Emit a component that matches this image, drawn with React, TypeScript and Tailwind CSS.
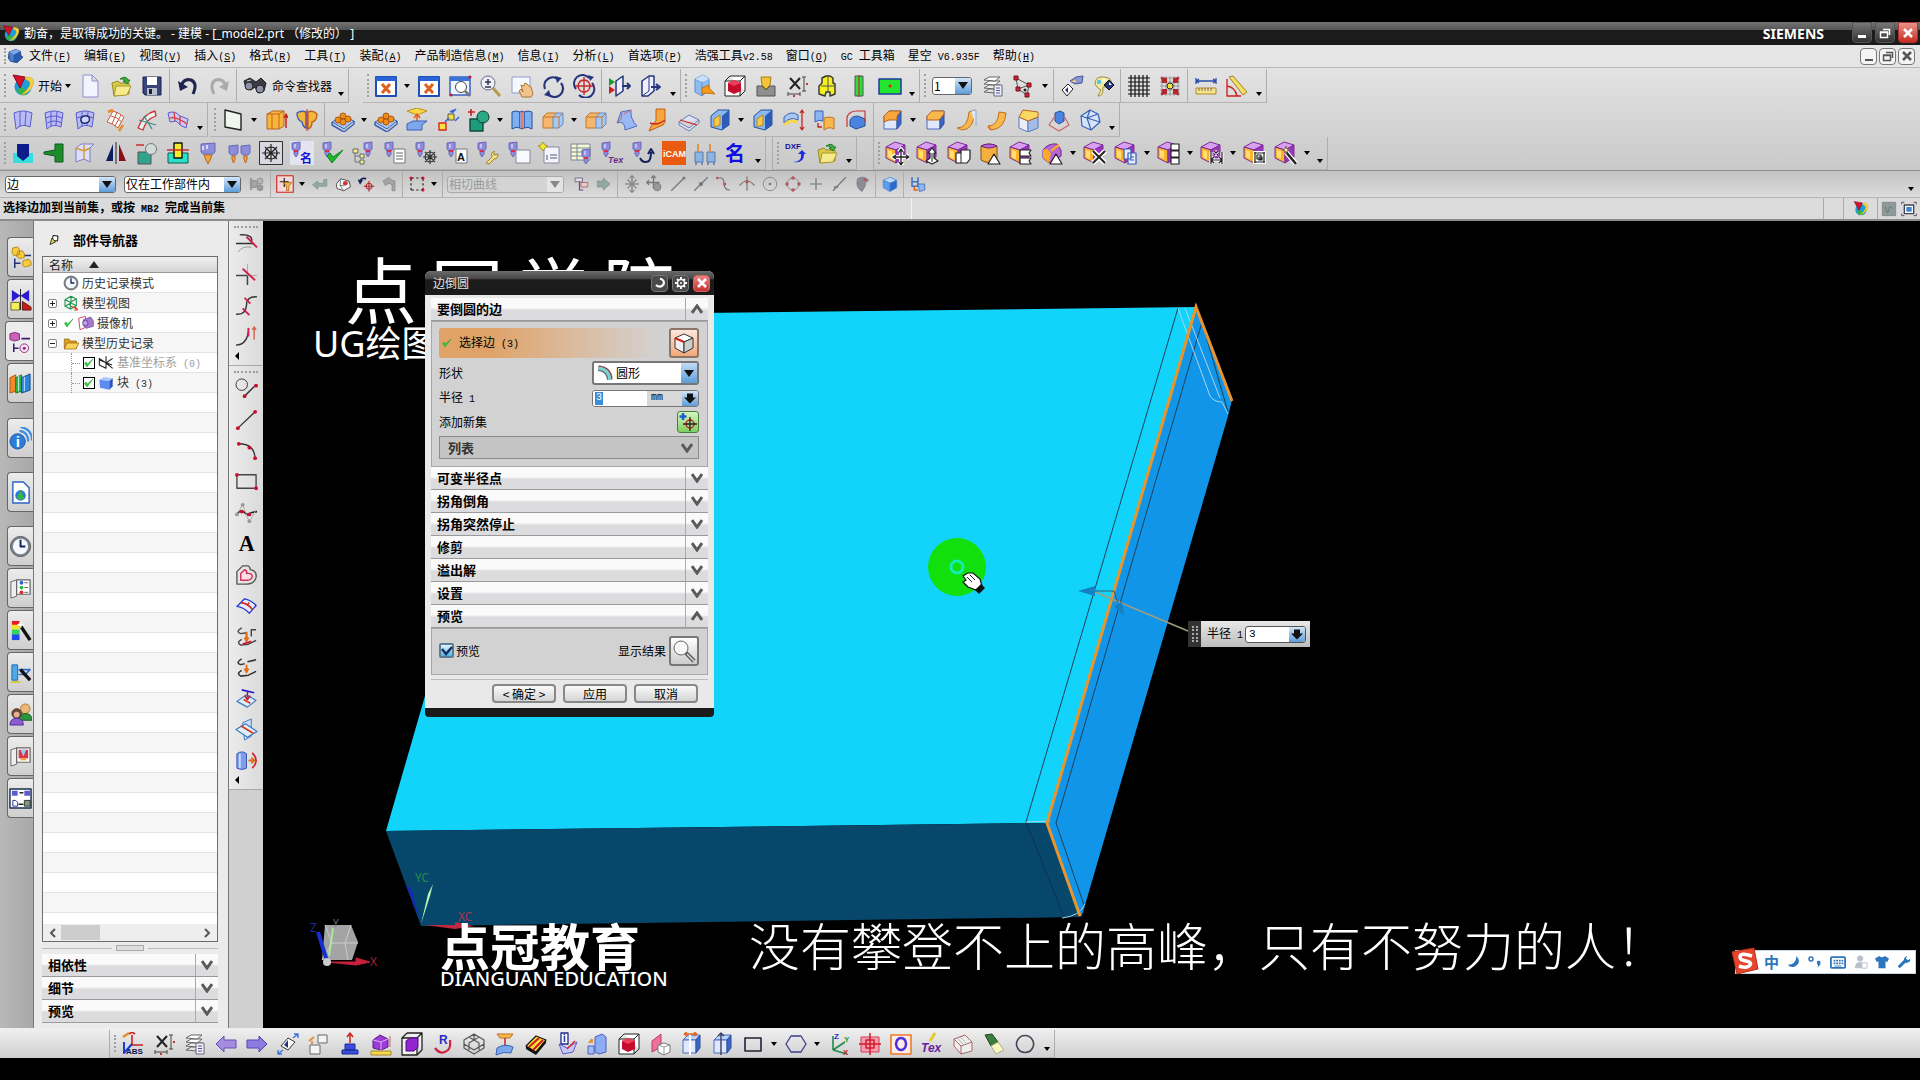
import React, { ReactNode } from 'react';
import clsx from 'clsx';

const p = (d: string, fill = 'none', stroke = 'none', w = 1) => (
  <path key={d + fill + stroke} d={d} fill={fill} stroke={stroke} strokeWidth={w} strokeLinejoin="round" />
);
const dot = (x: number, y: number, r = 1.6, fill = '#c8102e', stroke = 'none') => (
  <circle key={`${x}-${y}-${r}`} cx={x} cy={y} r={r} fill={fill} stroke={stroke} />
);

// Shared pieces that many of the tool icons are built from
const box = (top: string, left: string, right: string, line = 'none') => (
  <g key="box">
    {p('M3 7L12 3L21 7L12 11Z', top, line)}
    {p('M3 7V17L12 22V11Z', left, line)}
    {p('M21 7V17L12 22V11Z', right, line)}
  </g>
);
const drill = (
  <g key="drill">
    {p('M2 2L10 1V8L8 10V13L6 16L4 13V10L2 8Z', '#8d8ddb', '#6868b8')}
    {p('M4 10H8', 'none', '#d8304a', 2)}
    {p('M5 3V7', 'none', '#d5d5ff', 1.5)}
  </g>
);
const asmBox = (
  <g key="asm">
    {p('M1 6L10 1L20 4L11 9Z', '#d9a0f2', '#7a2c98')}
    {p('M1 6L11 9V22L1 17Z', '#fbb22c', '#7a2c98')}
    {p('M3 9L7 10V18L3 16Z', '#ffe070')}
    {p('M20 4V16L11 22V9Z', '#9a36bc', '#7a2c98')}
  </g>
);
const blueBox = (
  <g key="bb">
    {p('M4 8L9 3H21L17 8Z', '#bcd4f8', '#4a6fc0')}
    {p('M4 8H17V21H4Z', '#dfe8ff', '#4a6fc0')}
    {p('M17 8L21 3V16L17 21Z', '#3a66c8', '#2f509c')}
  </g>
);
const sheet = p('M3 5Q12 1 21 5L19 19Q11 15 5 21Z', '#b9bcf4', '#5a5ad0');
const page = p('M11 8H22V22H11Z', '#fff', '#777');
const folder = (
  <g key="folder">
    {p('M3 9L9 7L11 9H20V20L5 22Z', '#d8c94c', '#9a8d20')}
    {p('M7 12H22L18 21L5 22Z', '#f5eb8c', '#a8992c')}
    {p('M11 5Q17 1 19 6H21L18 10L14 7H16Q15 4 11 5Z', '#3fae3f', '#1e7d22')}
  </g>
);
const dims = (
  <g key="dims">
    {p('M5 4L15 15M15 4L5 15', 'none', '#222', 2)}
    {p('M19 3V17M17 3H21M17 17H21M3 20H15M3 18V22M15 18V22', 'none', '#444')}
    {p('M21 9L23 11M23 9L21 11M8 21L10 23M10 21L8 23', 'none', '#c33')}
  </g>
);
const layers = (
  <g key="layers">
    {p('M3 18L8 15H19L14 19Z', '#e4e4e4', '#666')}
    {p('M3 14L8 11H19L14 15Z', '#eee', '#666')}
    {p('M3 10L8 7H19L14 11Z', '#fff', '#666')}
    {p('M3 6L8 3H19L14 7Z', '#fff', '#666')}
    {p('M13 11H21V22H13Z', '#eef', '#667')}
    {p('M15 14H19M15 16.5H19M15 19H19', 'none', '#558')}
  </g>
);
const swirl = (
  <g key="swirl">
    {dot(12, 13, 8.5, '#1a9ee0')}
    {p('M5 16Q9 23 17 20L12 13Z', '#35b24a')}
    {p('M15 3Q25 3 22 11Q19 19 10 21Q18 15 19 10Q19 6 15 6Z', '#f3d23a', '#c7a010', 0.5)}
    {p('M2 1L14 3L9 14Z', '#d3122c', '#8b0c1c')}
  </g>
);
const check = p('M3 13L8 20L20 4L9 14L6 10Z', '#2ed33a', '#149620');
const winX = (
  <g key="winx">
    {p('M2 3H22V22H2Z', '#fff', '#1c4fb8', 2)}
    {p('M2 3H22V7H2Z', '#2a64d8')}
    {p('M8 10L16 19M16 10L8 19', 'none', '#e0601c', 3)}
  </g>
);
const text = (x: number, y: number, t: string, fill: string, size: number, extra = '') => (
  <text key={t} x={x} y={y} fill={fill} fontSize={size} className={clsx("font-['Liberation_Sans','Noto_Sans_CJK_SC',sans-serif] font-bold", extra)}>{t}</text>
);

const icons: Record<string, ReactNode> = {
  nx: swirl,
  doc: p('M5 1H14L20 7V23H5Z M14 1V7H20', '#f4f4ff', '#8e8ed0'),
  open: folder,
  save: [p('M3 3H21V21H5L3 19Z', '#39457c', '#1a2350'), p('M7 3H17V11H7Z', '#fff'), p('M7 14H17V21H7Z', '#b8c0d0'), p('M9 15H12V20H9Z', '#222')],
  undo: [p('M5 12Q8 4 15 6Q22 9 17 20', 'none', '#1e2350', 3), p('M2 7L4 17L12 13Z', '#1e2350')],
  redo: [p('M19 12Q16 4 9 6Q2 9 7 20', 'none', '#aaa', 3), p('M22 7L20 17L12 13Z', '#aaa')],
  binoculars: [p('M1 7L7 4L13 8L18 4L23 9L21 17L15 19L12 13L8 16L3 14Z', '#3b3b46', '#222'), dot(6, 12, 4, '#8c90a8', '#222'), dot(17, 15, 4, '#8c90a8', '#222'), p('M4 7L8 6', 'none', '#ccc')],
  fit: winX,
  fit2: winX,
  zoomWin: [p('M2 3H22V21H2Z', '#eef4ff', '#3a62c0', 1.5), p('M2 3H22V7H2Z', '#3a72d8'), dot(13, 13, 5.5, '#fff', '#444'), p('M17 17L22 22', 'none', '#777', 2.5), dot(22, 3, 1.5), dot(3, 21, 1.5)],
  zoom: [dot(9, 9, 7, '#eef', '#6a6a80'), p('M14 14L21 22', 'none', '#b79a50', 3), p('M6 8H12M9 5V11M6 13H12', 'none', '#334', 1.5)],
  pan: [p('M2 3H20V19H2Z', '#f6f8ff', '#8c9cd0'), p('M12 23L9 17L11 15L13 18L11 11L14 12L15 9L17 10L19 12L21 13L23 20L21 23Z', '#f2c48c', '#a87838')],
  rotate: [p('M4 15A8.5 8.5 0 0 1 17 5', 'none', '#24357c', 2.2), p('M20 9A8.5 8.5 0 0 1 7 20', 'none', '#24357c', 2.2), p('M14 2L21 4L16 9Z', '#24357c'), p('M10 23L3 21L8 16Z', '#24357c')],
  orient: [p('M4 15A8.5 8.5 0 0 1 17 4', 'none', '#24357c', 2), p('M20 9A8.5 8.5 0 0 1 7 21', 'none', '#24357c', 2), p('M12 6A6 6 0 1 0 12.1 6M12 3V21M3 12H21', 'none', '#c62828', 1.4), p('M16 1L22 3L18 7Z', '#24357c')],
  clipView: [p('M1 4L7 8L1 12Z', '#1c9c2c'), p('M1 12L7 16L1 20Z', '#d01c1c'), p('M8 7L15 2V17L8 22Z', '#eef', '#24357c', 1.5), p('M14 12H21M19 9L22 12L19 15', 'none', '#24357c', 2)],
  clipEdit: [p('M3 7L10 2H15V17L9 22H3Z', '#eef', '#24357c', 1.5), p('M10 2V17L3 22', 'none', '#24357c'), p('M12 13H20M17 10L21 13L17 16', 'none', '#24357c', 2)],
  move: [p('M3 5L11 1L17 5V16L10 22L3 18Z', '#8ebcf0', '#5c8ccc'), p('M3 5L10 8V22', 'none', '#5c8ccc'), p('M3 5L11 1L17 5L10 8Z', '#c8e0fa'), p('M10 14L17 11V14L23 20L14 19L10 20Z', '#f39a1c', '#c27010')],
  redCube: [p('M2 7H17V22H2ZM7 2H22V17M2 7L7 2M17 7L22 2M17 22L22 17', '#fff', '#222'), p('M5 9L11 6L18 9V17L11 20L5 17Z', '#c30d2b'), p('M5 9L11 6L18 9L11 12Z', '#f03d5c')],
  holder: [p('M3 12H8L12 16L16 12H21V22H3Z', '#8f8f8f', '#555'), p('M7 3H17L16 11L12 15L8 11Z', '#f3c33c', '#a87c10')],
  dims,
  puzzle: [p('M6 4L10 2H14L17 4V9L19 10V20L14 22V18H10L9 22L3 20V12L6 9Z', '#f4ee22', '#333', 1.4), p('M12 3V18M5 12H19', 'none', '#555')],
  greenBar: [p('M8 2H16V22H8Z', '#27e03a', '#555'), p('M12 1V23', 'none', '#c23', 1.2)],
  greenBox: [p('M1 5H23V20H1Z', '#22e52e', '#1c3aa0', 1.5), dot(12, 12, 1.5, '#d22')],
  layers,
  nodes: [p('M4 4L17 11L6 15L15 21M4 4L6 15M17 11L15 21', 'none', '#555'), p('M2 2H6V6H2ZM4 13H8V17H4ZM15 9H19V13H15ZM13 19H17V23H13Z', '#c24', '#711'), dot(13, 16, 1.5, '#222')],
  handLayer: [p('M10 7L16 3L23 2L22 9L15 10Z', '#8a94d8', '#4c569c'), p('M11 8L15 5L17 8', '#f6d29c', '#997'), p('M2 16L8 10L13 15L7 22Z', '#fff', '#222'), p('M5 16L8 13V19Z', '#24357c')],
  palette: [p('M4 10Q4 2 13 3Q22 4 20 10Q18 14 14 13Q11 12 12 16Q12 22 7 22L10 16Q6 14 4 10Z', '#f4ea9c', '#9c8c3c'), dot(8, 8, 2.2, '#4cc8e8'), dot(13, 6, 1.6, '#fff'), p('M13 11L18 6L23 11L18 16Z', '#24357c', '#111'), p('M18 8L21 11H18Z', '#fff')],
  grid: p('M4 1V23M8 1V23M12 1V23M16 1V23M20 1V23M1 4H23M1 8H23M1 12H23M1 16H23M1 20H23', 'none', '#111', 1.2),
  gridSnap: [p('M4 2V22M8 2V22M12 2V22M16 2V22M20 2V22M2 4H22M2 8H22M2 12H22M2 16H22M2 20H22', 'none', '#999'), p('M3 3L9 4L9 9L4 9ZM15 4L21 3L20 9L15 9ZM4 15H9V20L3 21ZM15 15H20L21 21L15 20Z', '#b3262c'), dot(12, 12, 3, '#f2e53c', '#222')],
  measure: [p('M2 14H22V20H2Z', '#f6e58c', '#a48a2c'), p('M5 14V17M8 14V17M11 14V17M14 14V17M17 14V17', 'none', '#865'), p('M2 7H22M2 4V10M22 4V10M2 7L5 5M2 7L5 9M22 7L19 5M22 7L19 9', 'none', '#2a4ca8', 1.3)],
  angle: [p('M4 3L8 2L22 18L18 21Z', '#f2dc6c', '#a08420'), p('M2 5V22H16M2 12Q10 13 12 22', 'none', '#c22', 1.4)],

  surf1: [sheet, p('M9 4L9 18M15 4L14 17', 'none', '#5a5ad0')],
  surf2: [sheet, p('M9 4L9 18M15 4L14 17M4 10Q12 6 20 10M5 15Q12 11 20 15', 'none', '#5a5ad0')],
  surf3: [sheet, p('M9 4L9 18M15 4L14 17M4 10Q12 6 20 10', 'none', '#5a5ad0'), p('M8 10Q12 6 16 9Q18 14 13 15Q7 16 8 10Z', '#cfd8f8', '#1a2a60', 1.5)],
  surf4: [p('M9 3Q16 5 20 9L14 20Q8 15 3 14Z', '#fff', '#c85a3c'), p('M13 4L8 16M17 7L11 18M7 8Q13 9 18 14', 'none', '#c85a3c'), p('M4 4L9 2M19 17L15 23', 'none', '#e88c2c', 2.5)],
  surf5: [p('M3 20Q8 6 20 3L21 8Q11 11 8 22Z', '#e6f4ef', '#c33', 1.3), p('M4 12L21 17M9 8L17 21', 'none', '#3a8a8a', 1.3)],
  surf6: [p('M2 5Q9 2 14 8L22 11L20 20Q14 18 10 13L4 14Z', '#c9c9f8', '#5a5ad0'), p('M8 4L9 13M14 8V17M4 10Q10 8 21 16', 'none', '#d33', 1.2)],
  plane: p('M4 2L20 6V22L4 19Z', '#eef6ee', '#222', 1.4),
  extrude: [p('M3 6L9 3H20V18L15 21H3Z', '#f6b63c', '#b8641c'), p('M8 6V21M15 6V21M3 6H15L20 3', 'none', '#c4601c'), p('M22 20V7M20 10L22 6L24 10', 'none', '#c22', 1.5)],
  revolve: [p('M2 5Q6 2 11 4V20Q8 19 7 14Q2 12 2 5Z', '#f6b63c', '#3a62b8', 1.4), p('M13 4Q18 2 22 6Q22 13 17 14Q17 20 13 21Z', '#f6b63c', '#b8641c', 1.4), p('M12 1V23', 'none', '#c22')],
  pattern: [p('M1 14L12 8L23 13L13 21Z', '#a6c4f4', '#3a62b8'), p('M1 14V17L13 24L23 16V13', 'none', '#3a62b8', 1.5), dot(7, 12, 3, '#f08c1c', '#a85a08'), dot(12, 8, 3, '#f08c1c', '#a85a08'), dot(12, 14, 3, '#f08c1c', '#a85a08'), dot(17, 11, 3, '#f08c1c', '#a85a08')],
  padUp: [p('M2 3L12 0L22 3L12 7Z', '#f8d848', '#c09018'), p('M12 7V15M9 10L12 6L15 10', 'none', '#e0601c', 1.5), p('M2 16L8 13H22L17 17V22H2Z', '#7ca8ec', '#3a62b8')],
  steps: [p('M3 15H10V22H3Z', '#f4e53c', '#d22', 1.4), p('M12 6H18V12H12Z', '#f4e53c', '#555'), p('M9 14L13 10M16 5L20 1M19 13L23 9M14 4L18 2', 'none', '#3a62d8', 1.6)],
  unite: [p('M3 11H16V23H3Z', '#1c9c78', '#0c4c3c', 1.4), dot(16, 9, 6, '#2aa884', '#0c3c30'), p('M4 1V8M1 4H8', 'none', '#c22', 1.6)],
  sew: [p('M2 4Q6 2 10 4V20Q6 18 2 21ZM14 4Q18 2 22 4V21Q18 18 14 20Z', '#7cb0f0', '#24509c'), p('M10 4Q12 2 14 4V20Q12 22 10 20Z', '#fff', '#24509c'), p('M12 3V21', 'none', '#c22', 1.2)],
  offsetFace: [p('M2 9L6 5H16V16L12 20H2Z', '#f6b66c', '#c2762c'), p('M12 9L16 5H22V16L18 20H12Z', '#a6c8f4', '#5c8ccc'), p('M2 9H18V20M18 9L22 5', 'none', '#c2762c')],
  bend: [p('M6 4L16 2Q15 11 22 18L10 22Q10 12 2 15Z', '#9ab8f4', '#4a6fc0'), p('M6 4Q9 9 2 15M16 2L9 6', 'none', '#c66')],
  boot: [p('M10 1H19V14L17 17L3 23Q5 16 10 13Z', '#f6a63c', '#c2601c'), p('M4 15Q11 18 19 12', 'none', '#c22', 1.4)],
  slab: [p('M2 14L12 7L22 12L12 20ZM2 14V17L12 23L22 15V12', '#dce4f4', '#6a7cb0'), p('M3 12L20 17', 'none', '#c22', 1.3)],
  clipBox: [p('M3 8L10 2H21V17L14 22L3 19Z', '#8cb8f0', '#24509c'), p('M14 8L21 2V17L14 22Z', '#2c5cb8'), p('M6 11L12 7V17L6 19Z', '#f8c848', '#b8841c')],
  thicken: [p('M2 9Q9 2 16 7V12Q9 8 2 15Z', '#a6c8f4', '#3a62b8'), p('M2 15Q9 9 16 13V16Q9 12 2 18Z', '#f8d848'), p('M20 2V22M18 5L20 2L22 5M18 19L20 22L22 19', 'none', '#c22', 1.3)],
  drape: [p('M2 3H10V13Q6 11 2 14Z', '#8cb4f0', '#3a62b8'), p('M11 10Q16 8 21 10V21Q16 18 11 22Z', '#f8b84c', '#c2701c'), p('M5 15V19H9', 'none', '#c22', 1.4)],
  wrap: [p('M6 13Q7 8 14 8L21 11V18L12 21L6 18Z', '#4b84e0', '#24509c'), p('M3 19V9Q5 3 13 3H21V14', 'none', '#c33', 1.2)],
  edgeBlend: [blueBox, p('M4 8L9 3H21L17 8V12H9L4 14Z', '#f6a63c', '#b8641c')],
  faceBlend: [blueBox, p('M9 3H21V6L16 12H4V8Z', '#f8b84c', '#b8641c')],
  blend1: [p('M3 20Q14 20 15 4L21 2Q20 22 8 22Z', '#f8b84c', '#c2701c'), p('M17 3L22 2V18', '#dce8ff', '#8ca8d0')],
  blend2: [p('M3 18Q13 18 14 4L21 5Q20 21 6 22Z', '#f8b84c', '#c2701c'), p('M3 18L6 22', 'none', '#e07030', 2)],
  chamfer: [p('M3 9L12 13V24L3 20Z', '#e8eefa', '#5c78b8'), p('M12 13L22 9V20L12 24Z', '#a6bce8', '#5c78b8'), p('M3 9L7 2L22 4V9L12 13Z', '#f8d860', '#c2601c')],
  draft: [p('M8 5L13 3L17 5V13L12 16L8 13Z', '#4b84e0', '#24509c'), p('M8 8L2 17L12 23L22 17L17 8', 'none', '#c66', 1.2)],
  body: p('M12 2L20 6L22 14L13 22L4 18L3 8ZM12 2L9 10L13 22M9 10L3 8M9 10L20 6M9 10L22 14', '#d5e4fa', '#3a62b8', 1.2),

  cavity: [p('M2 12H22V22H2Z', '#35e0dc'), p('M6 3H18V15L12 20L6 15Z', '#0c1c8c')],
  arrowSolid: p('M21 3V21H13V15L2 13V11L13 9V3Z', '#1c8c2c', '#0c5c1c'),
  prism: [p('M3 7L8 3H21L17 7V21L11 18L3 21Z', '#dce0fa', '#7c7cc8'), p('M11 4V18M17 7L11 10L3 7', 'none', '#d8982c', 1.4)],
  mirror: [p('M9 3V20L2 20Z', '#0c1c5c'), p('M15 3V20H22Z', '#8c0c1c'), p('M12 1V23', 'none', '#222')],
  subtract: [p('M3 11H16V23H3Z', '#2fa58c', '#555'), dot(16, 8, 5.5, '#d0dcd8', '#777'), p('M1 4H9', 'none', '#c22', 1.4)],
  insertBody: [p('M2 12H22V22H2Z', '#2ce0c8', '#0a5c4c'), p('M8 2H16V17H8Z', '#f6ec2c', '#111', 1.4), p('M1 9H23', 'none', '#c22', 1.4)],
  drill1: [p('M4 3L18 2V11L16 13H6L4 11Z', '#8d8ddb', '#6868b8'), p('M7 14H15L13 19L11 23L9 19Z', '#f3a83c', '#b8641c'), p('M6 5V9M10 4V8', 'none', '#d5d5ff', 2)],
  drill2: [p('M1 5L10 4V12L8 14H3L1 12ZM13 5L22 4V12L20 14H15L13 12Z', '#8d8ddb', '#6868b8'), p('M4 15H7V18L5.5 22L4 18ZM16 15H19V18L17.5 22L16 18Z', '#f3a83c', '#b8641c')],
  wheel: [p('M0.5 0.5H23.5V23.5H0.5Z', '#d8d8e0', '#333'), p('M12 6A6 6 0 1 0 12.1 6M12 3V21M3 12H21M6 6L18 18M18 6L6 18', 'none', '#222', 1.2)],
  drillName: [p('M0 0H24V24H0Z', '#e4e4f0'), drill, text(10, 22, '名', '#1414d8', 12)],
  drillCheck: [drill, p('M6 15L11 22L22 9L12 16L9 12Z', '#1cb82c', '#0c8418')],
  drillTree: [<g key="g" transform="translate(10)">{drill}</g>, p('M3 10V21H9M3 15H9', 'none', '#777'), p('M1 8H6V12H1ZM8 13H12V17H8ZM8 19H12V23H8Z', '#f4ee8c', '#666')],
  drillSheet: [drill, page, p('M13 12H20M13 15H20M13 18H20', 'none', '#666')],
  drillWheel: [drill, p('M16 11A5 5 0 1 0 16.1 11M16 9V23M9 16H23M11 11L21 21M21 11L11 21', 'none', '#333', 1.2)],
  drillA: [drill, page, text(12, 20, 'A', '#111', 11)],
  drillWrench: [drill, p('M10 22L16 16Q14 12 18 10L18 14L22 13Q22 18 18 18L13 23Z', '#f4e08c', '#9c8420')],
  drillDoc: [drill, p('M9 9H23V22H9Z', '#f8f8ff', '#889')],
  starDoc: [p('M6 6H21V22H6Z', '#f4f4ff', '#889'), p('M5 1L7 4L10 5L7 7L5 10L3 7L0 5L3 4Z', '#f4e53c', '#a89820'), p('M12 14H19M12 17H19M9 14V19', 'none', '#556')],
  drillTable: [p('M2 3H21V19H2Z', '#f6f6d0', '#789'), p('M2 7H21M2 11H21M2 15H21M8 3V19', 'none', '#789'), <g key="g" transform="translate(11 7)">{drill}</g>],
  drillTex: [drill, text(8, 22, 'Tex', '#6a2c8c', 9, 'italic')],
  swap: [<g key="g">{drill}</g>, p('M9 17Q12 23 18 20Q20 17 20 11M17 13L20 8L23 13', 'none', '#14205c', 2)],
  icam: [p('M0 0H24V24H0Z', '#ea5b12'), text(1, 16, 'iCAM', '#fff', 9)],
  twin: [p('M2 11H10V21H2ZM14 11H22V21H14Z', '#8db4e0', '#5878b0'), p('M5 11V3M17 11V3', 'none', '#d8984c', 2), p('M3 21V24M9 21V24M15 21V24M21 21V24', 'none', '#5878b0', 1.5)],
  name: text(1, 20, '名', '#1010e0', 20),
  dxf: [text(1, 8, 'DXF', '#1010a0', 8), p('M9 21Q18 21 17 13H14L18 9L22 13H20Q20 23 9 21Z', '#1a2ae0')],
  asmMove: [asmBox, p('M16 9V23M9 16H23M14 11L16 8L18 11M14 21L16 24L18 21M11 14L8 16L11 18M21 14L24 16L21 18', 'none', '#fff', 4), p('M16 9V23M9 16H23M14 11L16 8L18 11M14 21L16 24L18 21M11 14L8 16L11 18M21 14L24 16L21 18', 'none', '#222', 1.3)],
  asmUp: [asmBox, p('M16 7L20 12H18V17L22 20L16 23L10 20L14 17V12H12Z', '#fff', '#222', 1.2), p('M16 12V21', 'none', '#222')],
  asmDoc: [asmBox, p('M9 12H14V9H23V18L20 22H9Z', '#fff', '#222', 1.2), p('M14 12V22', 'none', '#222')],
  asmCyl: [p('M3 5Q11 1 19 5V19Q11 24 3 19Z', '#f3b03c', '#8a4c10'), p('M3 5Q11 1 19 5Q11 9 3 5Z', '#b765d8', '#6d2386'), p('M16 13L22 23H10Z', '#fff', '#222', 1.2)],
  asmFlag: [asmBox, p('M11 9H22L20 12L22 15H11ZM11 17H22L20 20L22 23H11Z', '#fff', '#222', 1.2)],
  asmRound: [p('M3 9Q8 2 17 3L21 9V15L9 22L3 17Z', '#b765d8', '#6d2386'), p('M3 9Q8 6 11 13L9 22L3 17Z', '#f8a82a'), p('M11 10L19 4', 'none', '#f8a82a', 2.5), p('M16 13L22 23H10Z', '#fff', '#222', 1.2)],
  asmX: [asmBox, p('M10 10L22 22M22 10L10 22', 'none', '#fff', 5), p('M10 10L22 22M22 10L10 22', 'none', '#222', 2)],
  asmCopy: [asmBox, p('M10 8H17V18H10Z M14 12H22V23H14Z', '#e4ecff', '#3a5cb0', 1.2), p('M16 16H20M16 19H20', 'none', '#3a5cb0')],
  asmList: [asmBox, p('M14 3H22V9H14ZM14 10H22V16H14ZM14 17H22V23H14Z', '#fff', '#222', 1.2)],
  asmDim: [asmBox, p('M11 11V23M22 11V23M11 19H22M14 16L11 19L14 22M19 16L22 19L19 22M14 10L18 14M18 10L14 14', 'none', '#fff', 3), p('M11 11V23M22 11V23M11 19H22M14 16L11 19L14 22M19 16L22 19L19 22M14 10L18 14M18 10L14 14', 'none', '#222', 1.2)],
  asmGroup: [asmBox, p('M10 10H23V23H10Z', '#fff'), p('M12 11V22M21 11V22M11 12H22M11 21H22M14 14H18V18H14ZM16 16H19V19H16Z', 'none', '#222', 1.2)],
  asmWand: [asmBox, p('M12 11L22 23', 'none', '#fff', 5), p('M12 11L22 23', 'none', '#222', 2.5), p('M12 5L13 8L16 9L13 10L12 13L11 10L8 9L11 8Z', '#fff7a0', '#865')],

  gears: [dot(8, 12, 5, '#a4a4a4', '#888'), dot(16, 8, 4, '#b4b4b4', '#888'), dot(16, 17, 4, '#9c9c9c', '#888'), p('M4 4V20', 'none', '#999', 3)],
  filter: [p('M1 1H23V23H1Z', '#f6d8d8', '#c22', 1.5), p('M11 4V16M5 9H17', 'none', '#222', 1.6), p('M10 10H21L17 15V21H14V15Z', '#f4b83c', '#a8641c')],
  back: p('M21 6V15H9V19L2 13L9 8V11H17V6Z', '#93a8a8', '#7c9090'),
  box3: [p('M3 12L9 5L20 8L22 16L13 21L4 18Z', '#f4f4f4', '#555', 1.3), p('M9 5L8 14L13 21M20 8L13 14L8 14', 'none', '#777', 1.2), dot(15, 11, 3, '#c33')],
  undoSel: [p('M4 9Q5 3 12 5', 'none', '#14205c', 2.5), p('M1 6L4 13L8 7Z', '#14205c'), p('M16 8V22M9 15H23M16 11A4 4 0 1 0 16.1 11', 'none', '#b3262c', 1.6)],
  hammer: p('M4 8L12 3L16 7L20 8V21H16V13L12 11L7 14Z', '#a4a4a4', '#8c8c8c'),
  dashBox: [p('M4 4H8M11 4H14M17 4H20M4 20H8M11 20H14M17 20H20M4 4V8M4 11V14M4 17V20M20 4V8M20 11V14M20 17V20', 'none', '#222', 1.6), dot(4, 4, 2), dot(20, 20, 2), dot(20, 4, 2)],
  chain: [p('M4 4H14V9H4Z', '#e8d8e8', '#557'), p('M12 10H21V16H12Z', '#e8c8c8', '#a55'), p('M10 9V20H15', 'none', '#557', 1.6)],
  go: p('M3 8H11V4L20 12L11 20V16H3Z', '#93a8a0', '#7c9088'),
  snapAny: p('M12 3V21M3 12H21M6 6L18 18M18 6L6 18M9 4L12 1L15 4M9 20L12 23L15 20', 'none', '#8c8c8c', 2),
  snapGear: [p('M10 2V18M2 10H18M7 4L10 1L13 4M4 7L1 10L4 13', 'none', '#777', 1.8), dot(15, 16, 5, '#999', '#777')],
  snapEnd: [p('M3 21L20 4', 'none', '#777', 1.6), dot(20, 4, 2, '#777')],
  snapMid: [p('M3 21L21 3', 'none', '#777', 1.6), dot(12, 12, 2.8, '#777')],
  snapPole: [p('M3 4Q12 2 12 11Q12 20 20 20', 'none', '#777', 1.6), dot(13, 12, 2, '#b55'), dot(3, 4, 1.8, '#b55')],
  snapCross: [p('M2 14Q12 2 22 14M12 2V21', 'none', '#777', 1.6), dot(12, 9, 2.2, '#b55')],
  snapCenter: [dot(12, 12, 9, 'none', '#777'), dot(12, 12, 1.8, '#777')],
  snapQuad: [dot(12, 12, 8, 'none', '#777'), dot(12, 4, 2.4, '#b55'), dot(12, 20, 2.4, '#b55'), dot(4, 12, 2.4, '#b55'), dot(20, 12, 2.4, '#b55')],
  snapPlus: p('M12 4V20M4 12H20', 'none', '#777', 1.6),
  snapOn: [p('M4 21L21 3', 'none', '#777', 1.6), p('M5 16H11', 'none', '#777', 2)],
  snapFace: [p('M6 5Q14 0 21 7L17 10Q17 15 12 22Q3 17 6 5Z', '#8c8c94', '#777'), dot(16, 6, 2, '#b55')],
  shaded: box('#bcdcf8', '#5c9cec', '#2c68c8', '#4a84d0'),
  wcs: [p('M4 3V15H12V3M4 9H12', 'none', '#3a72c8', 2), p('M12 12H21V20L14 22Z', '#8cb8f0', '#3a62b8'), p('M7 15V20H12', 'none', '#e0601c', 2)],
  touch: [p('M2 2H22V22H2Z', '#8c9a9a', '#777'), p('M6 8L10 18L14 8M14 8L18 12', 'none', '#6c7878', 1.5)],
  screen: [p('M5 6H19V19H5Z', '#fff', '#445', 2), p('M8 9H16V16H8Z', '#3a84d8'), p('M1 5V2H5M19 2H23V5M23 19V22H19M5 22H1V19', 'none', '#556', 1.5)],

  absCsys: [p('M11 3V13H22M8 2L11 0L14 2', 'none', '#c22', 1.6), p('M2 5L8 1', 'none', '#e88c2c', 2.5), p('M3 10V21L11 12', 'none', '#1a3ad0', 2), text(5, 22, 'ABS', '#0c1450', 8)],
  prev: p('M2 12L10 4V8H22V16H10V20Z', '#a48ce0', '#6c4cb8'),
  next: p('M22 12L14 4V8H2V16H14V20Z', '#8c7ce0', '#5444b0'),
  layerMove: [p('M5 14L12 6L19 10L12 18Z', '#fff', '#333'), p('M12 8V16L8 13Z', '#24357c'), p('M17 6L22 2M18 2H22V6M7 18L2 22M2 18V22H6', 'none', '#3a72e0', 1.4)],
  copyBox: [p('M11 3H20V11H11Z', '#f4f4f4', '#666'), p('M3 13H13V22H3Z', '#f4f4f4', '#666'), p('M2 9L7 5M5 12V9', 'none', '#e88c2c', 1.8)],
  post: [p('M7 12H17V18H7ZM4 18H20V22H4Z', '#3a4ce0', '#1c2c90'), p('M12 11V3M9 5L12 1L15 5', 'none', '#c22', 1.5)],
  purpleBox: [p('M4 8L11 3L19 7V15L12 18L4 16Z', '#9c3cd8', '#5c1c8c'), p('M4 8L12 10L19 7M12 10V18', 'none', '#e0b0f4'), p('M2 19H22V23H2Z', '#f4d84c', '#a8842c'), p('M21 4V15', 'none', '#c66')],
  wireCube: [p('M2 6H17V23H2ZM7 1H22V18M2 6L7 1M17 6L22 1M17 23L22 18', '#f0f0f0', '#222', 1.3), p('M6 9L10 6H18V15L14 19H6Z', '#9424d0', '#4c0c7c')],
  radius: [text(8, 12, 'R', '#2a2ac8', 12), p('M4 16Q10 24 17 18Q20 15 19 8', 'none', '#d0203c', 2.2)],
  net: p('M12 2L22 8V16L12 22L2 16V8ZM12 2V8M7 5L17 11V18M17 5L7 11V18M2 12L12 18L22 12', 'none', '#555', 1.2),
  lamp: [p('M4 2H20L17 6H7Z', '#f4b84c', '#c2701c'), p('M12 6V14', 'none', '#c22', 1.5), p('M4 16Q12 11 20 15L18 21Q11 19 3 23Z', '#7ca8ec', '#3a62b8')],
  stripes: [p('M2 14L12 4L22 8L12 20Z', '#f4e22c', '#111', 1.2), p('M5 15L15 6M9 18L19 8', 'none', '#d0182c', 2), p('M2 14L12 20L22 8V11L12 23L2 17Z', '#111')],
  info: [p('M4 12L12 16L22 10L18 20L8 22Z', '#c8c8f4', '#5a5ad0'), p('M6 1H13V12H6Z', '#fff', '#1a2a90', 1.3), text(8, 10, 'i', '#1a2a90', 10), p('M12 17L20 9', 'none', '#d22', 1.5)],
  cyl: [p('M9 5L16 2L20 5V20L13 22L9 20Z', '#8cacf4', '#4a5cc0'), p('M2 14H8V22H2Z', '#a4bcf8', '#4a5cc0'), p('M3 11L6 7M6 7V11', 'none', '#e88c2c', 1.8)],
  pinkPlane: [p('M4 9L13 2V15L4 20Z', '#f0709c', '#b83c6c'), p('M10 13L16 11L22 13V20L16 23L10 20Z', '#fff', '#777'), p('M10 13L16 15L22 13M16 15V23', 'none', '#999')],
  split1: [blueBox, p('M11 1V23', 'none', '#fff', 2), p('M5 2H18M5 2L8 0M5 2L8 4M18 2L15 0M18 2L15 4', 'none', '#e0601c', 1.3)],
  split2: [blueBox, p('M11 1V23M8 4L11 1L14 4', 'none', '#446', 1.5)],
  rect: p('M4 6H20V19H4Z', 'none', '#223', 1.6),
  hex: p('M7 4H17L22 12L17 20H7L2 12Z', 'none', '#3a3a8c', 1.3),
  csys: [p('M6 18V4M6 18L20 22M6 18L18 10', 'none', '#1c8c4c', 1.6), text(7, 7, 'Z', '#1a2ae0', 8), text(17, 10, 'Y', '#1c9c2c', 8), text(16, 23, 'X', '#c22', 8)],
  target: [p('M3 5H21V20H3Z', '#f49cac', '#d0405c'), p('M12 1V23M1 12H23M8 8H16V16H8Z', 'none', '#d01c2c', 1.5)],
  ring: [p('M2 3H22V22H2Z', '#fbeee4', '#f0782c', 1.6), p('M12 6A5 6 0 1 0 12.1 6', 'none', '#4c2ce0', 2.5)],
  tex: [text(1, 20, 'Tex', '#6a1ca0', 12, 'italic'), p('M10 9L15 1', 'none', '#e8c82c', 3)],
  hatch: [p('M3 7L14 3L21 10L21 19L10 22L3 14Z', '#eee', '#a66'), p('M3 7L10 14V22M10 14L21 10', 'none', '#a66'), p('M6 6L13 13M9 5L16 12', 'none', '#bbb')],
  spot: [p('M3 3L10 2L16 10L9 14Z', '#3c7c3c', '#1c4c1c'), p('M9 14L16 10L22 18L14 22Z', '#f8f8c0', '#aa8')],
  circle: p('M12 3.5A8.5 8.5 0 1 0 12.1 3.5', 'none', '#445', 1.6),

  trim: [p('M1 12H20M5 3Q20 2 17 11', 'none', '#333', 1.5), p('M3 21Q8 14 17 16', 'none', '#999'), p('M12 5L23 16', 'none', '#d0204c', 2)],
  corner: [p('M1 13H13V23', 'none', '#444', 1.6), p('M13 1V13H23', 'none', '#aaa'), p('M8 6L21 18', 'none', '#d0204c', 2)],
  extendCrv: [p('M1 21Q11 22 12 12Q12 2 23 3', 'none', '#333', 1.5), p('M10 4L16 10M8 15L15 22', 'none', '#d0204c', 2)],
  lenCrv: [p('M1 21Q12 21 14 7', 'none', '#333', 1.5), p('M14 12V3', 'none', '#d0204c', 2), p('M20 3V15M18 5L20 2L22 5', 'none', '#d8604c', 1.5)],
  profile: [dot(7, 8, 6, 'none', '#333'), p('M9 21L22 8', 'none', '#333', 1.5), dot(22, 9, 2), dot(10, 20, 2)],
  line: [p('M3 21L21 4', 'none', '#333', 1.4), dot(3, 21, 2), dot(21, 4, 2)],
  arc: [p('M4 5Q20 5 21 20', 'none', '#333', 1.4), dot(4, 5, 2), dot(15, 9, 2), dot(21, 20, 2)],
  rect2: [p('M2 5H22V19H2Z', 'none', '#444', 1.4), dot(2, 5, 2), dot(22, 19, 2)],
  spline: [p('M2 14Q5 8 10 12T15 14T23 11', 'none', '#222', 1.8), p('M2 14L8 4L15 22L22 9', 'none', '#aaa'), dot(7, 11, 2), dot(15, 14, 2), dot(8, 4, 2, '#999'), dot(15, 21, 2, '#999'), dot(2, 14, 2, '#999')],
  letterA: <text x="4" y="20" fontSize="23" className="font-['Liberation_Serif',serif] font-bold">A</text>,
  offset: [p('M2 22V9L8 3H14Q16 5 16 7Q23 8 22 15Q20 22 12 22Z', 'none', '#555', 1.4), p('M6 18V11L10 7Q13 8 12 11Q18 10 18 14Q17 18 13 18Z', '#f8e0e8', '#d0305c', 1.5)],
  bridge: [p('M2 13L10 5Q18 7 22 12L15 20Q9 14 2 13Z', '#e4ecff', '#2a3ad0', 1.4), p('M6 9Q14 10 18 16M12 12L15 9', 'none', '#d0301c', 1.8)],
  proj1: [p('M7 3Q0 7 6 9L12 8V14M7 15Q1 18 6 21L14 20L22 16M22 5H17V12', 'none', '#444', 1.5), p('M12 7V15M10 13L12 17L14 13', 'none', '#e0701c', 2), p('M8 20L17 17', 'none', '#d01c3c', 2)],
  proj2: [p('M7 3Q0 7 6 9L10 8M13 6L22 4M7 15Q1 18 6 21L14 20L22 16', 'none', '#333', 1.6), p('M12 9V15M10 13L12 17L14 13', 'none', '#e0701c', 2)],
  proj3: [p('M2 15L12 8L22 14L13 21Z', '#e0ecfa', '#3a7cc0', 1.2), p('M7 3L20 6', 'none', '#1a1ad8', 1.8), p('M13 5V11M10 9L13 13L16 9', 'none', '#b01c2c', 1.6), p('M9 13L16 17', 'none', '#d03c1c', 1.8)],
  sect: [p('M8 5L17 1L17 19L10 23Z', '#cfe0f6', '#3a7cc0'), p('M1 12L11 6L23 14L13 20Z', '#e0ecfa', '#3a7cc0', 1.2), p('M6 8L19 16', 'none', '#d03c1c', 1.8)],
  unwrap: [p('M2 5Q7 1 12 5V20Q7 23 2 20Z', '#7c9cec', '#3a50b0'), p('M5 5V20', 'none', '#c8d8fc', 2), p('M14 12H19M17 9L20 12L17 15', 'none', '#e0701c', 2), p('M18 4Q26 12 18 20', 'none', '#d01c2c', 1.6)],

  asmTree: [p('M6 13V23M6 18H12M14 10H23', 'none', '#24357c', 1.6), p('M4 2L9 1L11 4V9L5 10L3 7ZM9 6L14 5L16 8V12L11 13L8 11ZM15 15L21 14L23 17V20L17 22L14 20Z', '#f4cc3c', '#b8881c')],
  constraint: [p('M3 2L12 8L3 14ZM21 2L12 8L21 14Z', '#2a1cd0'), p('M2 15H11V23H2Z', '#f4ee5c', '#663'), p('M14 14L23 20V23H14Z', '#c81c1c', '#611'), p('M12 1V23', 'none', '#222')],
  partTree: [p('M2 4Q7 1 12 4V10Q7 13 2 10Z', '#c864b8', '#8c2c7c'), p('M6 14V23M6 19H11M14 9H23', 'none', '#3a1c6c', 1.6), dot(17, 19, 4.5, '#f4e4f4', '#8c2c7c'), dot(17, 19, 1.6, '#8c2c7c')],
  books: [p('M1 6L7 3V20L1 22Z', '#f0882c', '#b05c10'), p('M7 6L13 3V20L7 22Z', '#2cb83c', '#187c24'), p('M13 6L22 2V19L13 22Z', '#2c84dc', '#14508c'), p('M10 4V20M16 5V20', 'none', '#cfe8ff')],
  rss: [dot(9, 15, 8, '#2c7cd8', '#1c58a8'), text(7, 21, 'i', '#fff', 16), p('M11 4Q20 5 20 15M12 0Q24 2 24 14', 'none', '#3c8ce0', 2.2)],
  web: [p('M4 1H15L21 7V23H4Z', '#fff', '#2c64c0', 1.5), dot(12, 15, 5.5, '#2c7cd8'), p('M12 10L16 18Q12 21 8 18Z', '#3cb83c')],
  clock: [dot(12, 12, 10.5, '#7c8490', '#555'), dot(12, 12, 8, '#f4f8ff'), p('M12 5V12H17', 'none', '#14205c', 2)],
  roles: [p('M2 5L8 3V20L2 22Z', '#eee', '#666'), p('M8 3H22V18H8Z', '#fff', '#666', 1.3), dot(13, 6, 2, '#2c64d8'), dot(13, 11, 2, '#2cb83c'), dot(13, 16, 2, '#d82c2c'), p('M16 6H20M16 11H20M16 16H20', 'none', '#666')],
  colors: [p('M3 2H11V7H3Z', '#e81c1c'), p('M3 6H11V11H3Z', '#f4e42c'), p('M3 11H11V16H3Z', '#2cd85c'), p('M3 16H11V22H3Z', '#1c4ce8'), p('M12 7L22 22', 'none', '#111', 3.5), p('M12 3V9M9 6H15', 'none', '#fff', 2)],
  wand: [p('M3 4H9V20H3Z', '#4ca8e8', '#1c6cb0'), p('M10 9H22L17 14H10', 'none', '#2c6cc8', 1.6), p('M12 9L22 20', 'none', '#111', 3.5), p('M2 22H12', 'none', '#d8c82c', 1.8)],
  people: [dot(17, 6, 5, '#e8b878', '#b87830'), p('M10 18Q10 11 17 11Q24 11 24 18Z', '#2c943c', '#145c20'), dot(8, 11, 5, '#6c4c3c', '#432'), dot(8, 12, 3, '#e8b090'), p('M1 23Q1 16 8 16Q15 16 15 23Z', '#8c5cd0', '#54309c')],
  pages: [p('M2 5L8 3V20L2 22Z', '#eee', '#666'), p('M8 3H22V18H8Z', '#fff', '#666', 1.3), p('M10 5H20V14H10Z', '#d8384c'), p('M12 5H18L15 12Z', '#8cd0f8'), p('M12 15H18', 'none', '#f0a02c', 2)],
  cards: [p('M1 2H23V22H1Z', '#fff', '#14304c', 1.5), p('M3 4H9V9H3ZM16 4H22V9H16Z', '#5c5cd0'), p('M11 6H15M10 18H15', 'none', '#222', 1.4), p('M4 14H7L9 16V20H4Z', '#fff', '#2c2cb0'), p('M16 14H22V20H16Z', '#7c9c7c', '#333')],
  modelView: [p('M3 7L12 2L20 6V16L11 21L3 17ZM3 7L11 11L20 6M11 11V21M12 2V11M3 17L12 12L20 16', 'none', '#1c944c', 1.6), p('M12 17L21 21M18 18L22 22L17 23', 'none', '#d83c1c', 1.6)],
  camera: [p('M1 5L11 2L13 18L3 22Z', '#fff', '#d0405c', 1.4), p('M8 7L19 3L23 9V17L12 20L8 16Z', '#a878d0', '#5c3c8c'), dot(11, 12, 4, '#c0a0e8', '#4c2c7c')],
  folderOpen: [p('M2 6H9L11 9H20V20H2Z', '#e0a01c', '#8c5c08'), p('M6 12H24L19 21H2Z', '#fad25c', '#8c5c08')],
  datum: p('M12 12V2M12 12L2 5V15L12 20ZM12 12L22 5M12 12L22 20M3 8L21 15', 'none', '#222', 1.6),
  block: [p('M2 7L9 3L22 5L17 9Z', '#a8c8ff'), p('M2 7L17 9V22L3 19Z', '#5c8cf0'), p('M17 9L22 5V17L17 22Z', '#2c54b8')],
  appBlock: [p('M3 6L13 2L20 5L21 11L24 14L15 22L5 20L2 15Z', '#2c5cb0', '#14306c'), p('M3 6L13 2L20 5L10 10Z', '#7ca8e8'), p('M3 6L10 10V19L5 20Z', '#4c80d0')],
  tick: check,
  pin: [p('M10 3L20 4L19 14L9 13Z', '#fff', '#111', 2), p('M8 8L15 16L4 21Z', '#ded84c', '#111', 1.6)],
};

const Icon = ({ name, className = 'w-6 h-6' }: { name: string; className?: string }) => (
  <svg viewBox="0 0 24 24" className={clsx('shrink-0', className)} aria-hidden="true">{icons[name]}</svg>
);

const Caret = () => <span className="block border-x-[3px] border-t-[4px] border-x-transparent border-t-black" />;

// ":" grip   "|" separator   "v" drop-down caret   ">" overflow caret
const Tools = ({ names, small = false }: { names: string; small?: boolean }) => (
  <>
    {names.split(' ').map((name, i) => {
      if (name === ':') return <span key={i} className="ml-1 my-[5px] w-[3px] shrink-0 border-l-2 border-dotted border-[#a0a0a0] self-stretch" />;
      if (name === '|') return <span key={i} className="mx-[2px] w-px shrink-0 self-stretch bg-[#aeaeae]" />;
      if (name === 'v') return <button key={i} aria-label="更多" className="flex w-3 shrink-0 justify-center"><Caret /></button>;
      if (name === '>') return <button key={i} aria-label="工具条选项" className="flex w-[14px] shrink-0 items-end justify-center self-stretch pb-[6px]"><Caret /></button>;
      return (
        <button key={i} aria-label={name} className={clsx('flex shrink-0 items-center justify-center', small ? 'w-[23px]' : 'w-[31px]')}>
          <Icon name={name} className={small ? 'w-[18px] h-[18px]' : 'w-6 h-6'} />
        </button>
      );
    })}
  </>
);

const Bar = ({ children, className }: { children: ReactNode; className?: string }) => (
  <div className={clsx('flex items-center border-r border-b border-r-[#aeaeae] border-b-[#b4b4b4]', className)}>{children}</div>
);

const Combo = ({ label, value, disabled = false, className }: { label: string; value: string; disabled?: boolean; className: string }) => (
  <span className={clsx('flex shrink-0 overflow-hidden rounded-[3px] border', disabled ? 'border-[#aaa] bg-[#d4d4d4] text-[#999]' : 'border-[#666] bg-white', className)}>
    <select aria-label={label} disabled={disabled} className="min-w-0 flex-1 appearance-none pl-px leading-[14px] outline-none">
      <option>{value}</option>
    </select>
    <span className={clsx('flex w-4 items-center justify-center', disabled ? 'bg-[#e4e4e4]' : 'bg-linear-to-b from-[#d4e6f8] to-[#5c9cd8]')}>
      <span className={clsx('border-x-[5px] border-t-[7px] border-x-transparent', disabled ? 'border-t-[#888]' : 'border-t-[#111]')} />
    </span>
  </span>
);

const Chevron = ({ up = false }: { up?: boolean }) => (
  <svg viewBox="0 0 12 10" className="w-3 h-[10px]" aria-hidden="true">
    <path d={up ? 'M1 9L6 2L11 9' : 'M1 1L6 8L11 1'} fill="none" stroke="#5a5a5a" strokeWidth="3" />
  </svg>
);

const Section = ({ title, open = false }: { title: string; open?: boolean }) => (
  <button aria-expanded={open} className="flex h-[23px] w-full shrink-0 items-center border-b border-[#9a9a9a] bg-linear-to-b from-[#fafafa] from-45% to-[#dcdcdf] to-55% text-left font-bold">
    <span className="flex-1 pl-[6px] text-[13px]">{title}</span>
    <span className="flex h-full w-[23px] items-center justify-center border-l border-[#aaa]"><Chevron up={open} /></span>
  </button>
);

const menus: [string, string][] = [
  ['文件', 'F'], ['编辑', 'E'], ['视图', 'V'], ['插入', 'S'], ['格式', 'R'], ['工具', 'T'], ['装配', 'A'],
  ['产品制造信息', 'M'], ['信息', 'I'], ['分析', 'L'], ['首选项', 'P'], ['浩强工具v2.58', ''], ['窗口', 'O'],
  ['GC 工具箱', ''], ['星空 V6.935F', ''], ['帮助', 'H'],
];

// Latin runs take the half-width cell of the surrounding 12px characters
const Mixed = ({ children }: { children: string }) => (
  <>
    {children.split(/([\x20-\x7e]+)/).map((t, i) =>
      i % 2 ? <span key={i} className="font-['Liberation_Mono',monospace] text-[10px] whitespace-pre">{t}</span> : t
    )}
  </>
);

const RestoreGlyph = ({ color }: { color: string }) => (
  <svg viewBox="0 0 12 12" className="w-3 h-3"><path d="M1.5 5.5H8.5V10.5H1.5ZM4 2.5H10.5V8M1 5H9" fill="none" stroke={color} strokeWidth="1.5" /></svg>
);
const CrossGlyph = ({ color }: { color: string }) => (
  <svg viewBox="0 0 12 12" className="w-3 h-3"><path d="M2 2L10 10M10 2L2 10" stroke={color} strokeWidth="2.5" /></svg>
);

const TitleBar = () => (
  <header className="flex h-[23px] shrink-0 items-center bg-linear-to-b from-[#747474] via-[#555] via-34% to-[#1b1b1b] to-36% pl-[2px] text-white">
    <Icon name="nx" className="w-[18px] h-[18px]" />
    <h1 className="flex-1 pl-1 font-['Noto_Sans','Noto_Sans_CJK_SC',sans-serif] text-[12px] whitespace-pre">勤奋，是取得成功的关键。 - 建模 - [_model2.prt （修改的） ]</h1>
    <span className="pr-[28px] font-['Noto_Sans',sans-serif] text-[14px] font-bold">SIEMENS</span>
    <div className="flex h-full gap-[3px] pr-[2px] pb-[2px]">
      <button aria-label="最小化" className="flex w-5 items-end justify-center rounded-b-sm border border-[#555] bg-linear-to-b from-[#777] to-[#333] pb-1"><span className="h-[3px] w-2 bg-white" /></button>
      <button aria-label="还原" className="flex w-5 items-center justify-center rounded-b-sm border border-[#555] bg-linear-to-b from-[#777] to-[#333]"><RestoreGlyph color="#fff" /></button>
      <button aria-label="关闭" className="flex w-5 items-center justify-center rounded-b-sm border border-[#a33] bg-linear-to-b from-[#e89088] to-[#c8281c]"><CrossGlyph color="#fff" /></button>
    </div>
  </header>
);

const MenuBar = () => (
  <nav className="flex h-[23px] shrink-0 items-center border-b border-[#b8b8b8] bg-[#e6e6e6]">
    <span className="ml-1 h-4 w-[3px] border-l-2 border-dotted border-[#a0a0a0]" />
    <Icon name="appBlock" className="w-4 h-4" />
    <div className="flex flex-1 gap-[13px] pl-[6px]">
      {menus.map(([label, key]) => (
        <button key={label} className="leading-4 whitespace-nowrap">
          <Mixed>{label}</Mixed>
          {key && <span className="font-['Liberation_Mono',monospace] text-[10px]">(<u>{key}</u>)</span>}
        </button>
      ))}
    </div>
    <div className="flex gap-[2px] pr-[5px]">
      <button aria-label="最小化窗口" className="flex h-[17px] w-[17px] items-end justify-center rounded-[4px] border border-[#777] bg-[#f4f4f4] pb-[3px]"><span className="h-[2px] w-2 bg-[#555]" /></button>
      <button aria-label="还原窗口" className="flex h-[17px] w-[17px] items-center justify-center rounded-[4px] border border-[#777] bg-[#f4f4f4]"><RestoreGlyph color="#555" /></button>
      <button aria-label="关闭窗口" className="flex h-[17px] w-[17px] items-center justify-center rounded-[4px] border border-[#777] bg-[#f4f4f4]"><CrossGlyph color="#555" /></button>
    </div>
  </nav>
);

const Toolbars = () => (
  <div className="shrink-0 border-b border-[#929292] bg-linear-to-b from-[#e3e3e3] to-[#c9c9c9] pt-px">
    <div className="flex h-[34px]">
      <Bar className="mr-[14px]">
        <Tools names=": nx" />
        <button className="w-6">开始</button>
        <Tools names="v doc open save | undo redo | binoculars" />
        <button className="px-[2px] whitespace-nowrap">命令查找器</button>
        <Tools names=">" />
      </Bar>
      <Bar><Tools names=": fit v fit2 zoomWin zoom pan rotate orient | clipView clipEdit >" /></Bar>
      <Bar><Tools names=": move redCube holder dims puzzle greenBar greenBox >" /></Bar>
      <Bar>
        <Tools names=":" />
        <Combo label="工作图层" value="1" className="mx-[5px] h-[18px] w-10" />
        <Tools names="layers nodes v | handLayer palette | grid gridSnap | measure angle >" />
      </Bar>
    </div>
    <div className="flex h-[34px]">
      <Bar className="mr-[2px]"><Tools names=": surf1 surf2 surf3 surf4 surf5 surf6 >" /></Bar>
      <Bar>
        <Tools names=": plane v extrude revolve | pattern v pattern padUp steps unite v sew offsetFace v offsetFace bend boot slab clipBox v clipBox thicken drape wrap | edgeBlend v faceBlend blend1 blend2 chamfer draft body >" />
      </Bar>
    </div>
    <div className="flex h-[33px]">
      <Bar className="mr-[6px]">
        <Tools names=": cavity arrowSolid prism mirror subtract insertBody drill1 drill2 wheel drillName drillCheck drillTree drillSheet drillWheel drillA drillWrench drillDoc starDoc drillTable drillTex swap icam twin name >" />
      </Bar>
      <Bar className="mr-[16px] border-l border-l-[#aeaeae]"><Tools names=": dxf open >" /></Bar>
      <Bar className="border-l border-l-[#aeaeae]"><Tools names=": asmMove asmUp asmDoc asmCyl asmFlag asmRound v asmX asmCopy v asmList v asmDim v asmGroup asmWand v >" /></Bar>
    </div>
  </div>
);

const SelectionBar = () => (
  <div className="flex h-[27px] shrink-0 items-center border-b border-[#b4b4b4] bg-linear-to-b from-[#c2c2c2] to-[#dcdcdc] pl-[5px]">
    <Combo label="类型过滤器" value="边" className="mr-2 h-[17px] w-[111px]" />
    <Combo label="选择范围" value="仅在工作部件内" className="mr-1 h-[17px] w-[117px]" />
    <Tools small names="gears | filter v back box3 undoSel hammer | dashBox v |" />
    <Combo label="曲线规则" value="相切曲线" disabled className="ml-[2px] mr-[5px] h-[17px] w-[117px]" />
    <Tools small names="chain go | snapAny snapGear snapEnd snapMid snapPole snapCross snapCenter snapQuad snapPlus snapOn snapFace | shaded | wcs" />
    <button aria-label="工具条选项" className="ml-auto self-end pr-[6px] pb-[6px]"><Caret /></button>
  </div>
);

const StatusBar = () => (
  <div className="flex h-[23px] shrink-0 items-center border-b-2 border-[#8c8c8c] bg-[#dbdbdb] pl-[3px]">
    <p className="w-[908px] font-bold whitespace-nowrap"><Mixed>选择边加到当前集，或按 MB2 完成当前集</Mixed></p>
    <div className="flex h-full flex-1 items-center justify-end border-l border-[#f4f4f4]">
      <span className="h-full w-5 border-l border-[#aaa]" />
      <span className="flex h-full w-[35px] items-center justify-center border-x border-[#aaa]"><Icon name="nx" className="w-4 h-4" /></span>
      <span className="flex w-[42px] justify-evenly"><Icon name="touch" className="w-4 h-4" /><Icon name="screen" className="w-4 h-4" /></span>
    </div>
  </div>
);

const tabs = [
  ['asmTree', ''], ['constraint', ''], ['partTree', ''], ['books', 'mb-[13px]'], ['rss', 'mb-[12px]'], ['web', 'mb-[12px]'],
  ['clock', ''], ['roles', ''], ['colors', ''], ['wand', ''], ['people', ''], ['pages', ''], ['cards', ''],
];

const ResourceBar = () => (
  <div className="flex w-[33px] shrink-0 flex-col items-end gap-[2px] bg-linear-to-r from-[#b8b8b8] to-[#a8a8a8] pt-[16px]">
    {tabs.map(([name, gap]) => (
      <button
        key={name}
        aria-label={name}
        className={clsx('flex h-10 shrink-0 items-center justify-center rounded-l-[4px] border border-r-0 border-[#666]', gap,
          name === 'partTree' ? 'w-7 bg-[#ececec]' : 'w-[26px] bg-linear-to-b from-[#ececec] to-[#cfcfcf]')}
      >
        <Icon name={name} className="w-[23px] h-[23px]" />
      </button>
    ))}
  </div>
);

const Expander = ({ open }: { open: boolean }) => (
  <button aria-label={open ? '折叠' : '展开'} className="flex h-[9px] w-[9px] items-center justify-center rounded-[2px] border border-[#888] bg-white text-[#222]">
    <svg viewBox="0 0 7 7" className="w-[7px] h-[7px]"><path d={open ? 'M1 3.5H6' : 'M1 3.5H6M3.5 1V6'} stroke="currentColor" /></svg>
  </button>
);

const FeatureRow = ({ icon, label, dim = false }: { icon: string; label: string; dim?: boolean }) => (
  <li className="flex h-5 items-center">
    <span className="ml-[28px] h-full w-px border-l border-dotted border-[#999]" />
    <span className="w-[8px] border-t border-dotted border-[#999]" />
    <label className={clsx('flex items-center', dim && 'text-[#a0a0a0]')}>
      <span className="relative mx-[3px] flex">
        <input type="checkbox" defaultChecked className="h-3 w-3 appearance-none border border-black bg-white" />
        <svg viewBox="0 0 24 24" className="pointer-events-none absolute inset-0 w-3 h-3">{check}</svg>
      </span>
      <Icon name={icon} className="w-4 h-4" />
      <span className="pl-[3px] whitespace-pre"><Mixed>{label}</Mixed></span>
    </label>
  </li>
);

const Navigator = () => (
  <aside className="flex w-[196px] shrink-0 flex-col border-x border-l-[#777] border-r-[#777] bg-[#ebebeb] pr-[10px] pb-[5px] pl-[8px]">
    <h2 className="flex h-[35px] items-center gap-[13px] pt-[3px] pl-[6px] text-[13px] font-bold">
      <Icon name="pin" className="w-3 h-3" />部件导航器
    </h2>
    <div className="flex min-h-0 flex-1 flex-col border border-[#6c6c6c] bg-white">
      <div className="flex h-4 shrink-0 items-center border-b border-[#999] bg-linear-to-b from-[#f0f0f0] to-[#d4d4d4] pl-[6px] text-[#222]">
        名称<span className="ml-[16px] border-x-[5px] border-b-[7px] border-x-transparent border-b-[#222]" />
      </div>
      <ul className="flex-1 bg-[repeating-linear-gradient(to_bottom,#fff_0_19px,#e4e4e4_19px_20px,#f6f6f6_20px_39px,#e4e4e4_39px_40px)] text-[#333]">
        <li className="flex h-5 items-center gap-[3px] pl-[20px]"><Icon name="clock" className="w-4 h-4" />历史记录模式</li>
        <li className="flex h-5 items-center gap-[3px] pl-[5px]"><Expander open={false} /><Icon name="modelView" className="ml-[3px] w-4 h-4" />模型视图</li>
        <li className="flex h-5 items-center gap-[3px] pl-[5px]"><Expander open={false} /><Icon name="tick" className="ml-[3px] w-3 h-4" /><Icon name="camera" className="w-4 h-4" />摄像机</li>
        <li>
          <div className="flex h-5 items-center gap-[3px] pl-[5px]"><Expander open /><Icon name="folderOpen" className="ml-[3px] w-4 h-4" />模型历史记录</div>
          <ul>
            <FeatureRow icon="datum" label="基准坐标系 (0)" dim />
            <FeatureRow icon="block" label="块 (3)" />
          </ul>
        </li>
      </ul>
      <div className="flex h-[17px] shrink-0 items-center justify-between bg-[#eee] px-[6px]">
        <svg viewBox="0 0 8 10" className="w-2 h-[10px]"><path d="M6 1L2 5L6 9" fill="none" stroke="#555" strokeWidth="2" /></svg>
        <span className="mr-auto ml-1 h-[15px] w-[39px] bg-[#cdcdcd]" />
        <svg viewBox="0 0 8 10" className="w-2 h-[10px]"><path d="M2 1L6 5L2 9" fill="none" stroke="#555" strokeWidth="2" /></svg>
      </div>
    </div>
    <div className="flex h-3 shrink-0 items-center gap-1">
      <span className="h-px flex-1 bg-[#bbb]" />
      <span className="h-[6px] w-7 border border-[#aaa] bg-[#ddd]" />
      <span className="h-px flex-1 bg-[#bbb]" />
    </div>
    <Section title="相依性" />
    <Section title="细节" />
    <Section title="预览" />
  </aside>
);

const SideTools = ({ names }: { names: string }) => (
  <div className="flex flex-col items-center border-b border-[#aaa] bg-linear-to-r from-[#ececec] to-[#dadada] pt-[5px]">
    <span className="w-6 border-t-2 border-dotted border-[#a0a0a0]" />
    {names.split(' ').map((name) => (
      <button key={name} aria-label={name} className="flex h-[31px] items-center"><Icon name={name} className="w-[23px] h-[23px]" /></button>
    ))}
    <button aria-label="工具条选项" className="ml-[6px] mb-[5px] self-start border-y-[4px] border-r-[4px] border-y-transparent border-r-black" />
  </div>
);

const DownArrow = () => (
  <svg viewBox="0 0 16 14" className="w-4 shrink-0 self-stretch bg-linear-to-b from-[#d4e6f8] to-[#5c9cd8]"><path d="M5 2H11V6H14L8 12L2 6H5Z" fill="#111" /></svg>
);

const BlendDialog = () => (
  <section aria-label="边倒圆" className="absolute top-[50px] left-[162px] w-[289px] overflow-hidden rounded-t-[6px] rounded-b-[4px] border-b-[9px] border-[#1b1b1b] bg-[#e9e9e9]">
    <header className="flex h-[24px] items-center gap-[4px] bg-linear-to-b from-[#6c6c6c] via-[#444] via-34% to-[#1b1b1b] to-36% pr-1 text-[#e4e4e4]">
      <h2 className="flex-1 pl-2">边倒圆</h2>
      <button aria-label="重置" className="flex h-[17px] w-[17px] items-center justify-center rounded-sm border border-[#777] bg-[#4a4a4a]">
        <svg viewBox="0 0 12 12" className="w-3 h-3"><path d="M6 1.5Q11 3 9.5 7.5Q6 11.5 2 8" fill="none" stroke="#fff" strokeWidth="2.2" /></svg>
      </button>
      <button aria-label="选项" className="flex h-[17px] w-[17px] items-center justify-center rounded-sm border border-[#777] bg-[#4a4a4a]">
        <svg viewBox="0 0 14 14" className="w-[14px] h-[14px]"><path d="M7 1V13M1 7H13M3 3L11 11M11 3L3 11" stroke="#fff" strokeWidth="2" /><circle cx="7" cy="7" r="3.5" fill="#444" stroke="#fff" strokeWidth="1.5" /><circle cx="7" cy="7" r="1" fill="#fff" /></svg>
      </button>
      <button aria-label="关闭" className="flex h-[17px] w-[17px] items-center justify-center rounded-sm border border-[#c66] bg-linear-to-b from-[#e88080] to-[#c83030]"><CrossGlyph color="#fff" /></button>
    </header>
    <div className="px-[6px] pt-[3px]">
      <Section title="要倒圆的边" open />
      <div className="flex flex-col border border-[#a8a8a8] bg-[#d2d2d2] pt-[6px] pr-[8px] pb-[7px] pl-[7px]">
        <div className="flex items-center justify-between rounded-[3px] bg-linear-to-r from-[#dfa368] from-20% to-[#d2d2d2] to-85%">
          <span className="flex items-center gap-[6px] pl-[2px]"><Icon name="tick" className="w-3 h-[14px]" /><span className="whitespace-pre"><Mixed>选择边 (3)</Mixed></span></span>
          <button aria-label="选择边" className="flex h-[30px] w-[30px] items-center justify-center rounded-[3px] border-2 border-[#8c7468] bg-linear-to-b from-[#fbe8dc] to-[#f4a878]">
            <svg viewBox="0 0 24 24" className="w-6 h-6">{box('#fff', '#eee', '#ccc', '#333')}<path d="M3 7L12 11" stroke="#e01c1c" strokeWidth="2" /></svg>
          </button>
        </div>
        <div className="mt-[3px] flex items-center justify-between">
          <label htmlFor="shape">形状</label>
          <span className="flex h-6 w-[107px] items-center overflow-hidden rounded-[3px] border-2 border-[#777] bg-white">
            <svg viewBox="0 0 24 24" className="ml-[2px] w-[18px] h-4 shrink-0"><path d="M2 5Q18 6 19 22" fill="none" stroke="#555" strokeWidth="8" /><path d="M2 5Q18 6 19 22" fill="none" stroke="#7cd0d0" strokeWidth="5" /><path d="M3 1Q21 3 23 20" fill="none" stroke="#c22" /></svg>
            <select id="shape" className="min-w-0 flex-1 appearance-none pl-[2px] outline-none"><option>圆形</option></select>
            <span className="flex w-4 items-center justify-center self-stretch bg-linear-to-b from-[#c4dcf4] to-[#5c9cd8]"><span className="border-x-[5px] border-t-[7px] border-x-transparent border-t-[#111]" /></span>
          </span>
        </div>
        <div className="mt-[3px] flex items-center justify-between">
          <label htmlFor="radius" className="leading-[17px] whitespace-pre"><Mixed>半径 1</Mixed></label>
          <span className="flex h-[17px] w-[107px] items-center overflow-hidden rounded-[3px] border border-[#777] bg-[#d8d8d8]">
            <span className="flex h-full w-[54px] bg-white pl-[2px]">
              <input id="radius" defaultValue="3" className="my-px h-[13px] w-[8px] bg-[#3c8cd8] pl-px font-['Liberation_Mono',monospace] text-[10px] text-white outline-none" />
            </span>
            <span className="flex-1 pl-1 font-['Liberation_Mono',monospace] text-[10px]">mm</span>
            <DownArrow />
          </span>
        </div>
        <div className="mt-[3px] flex items-center justify-between">
          <span>添加新集</span>
          <button aria-label="添加新集" className="flex h-[22px] w-[22px] items-center justify-center rounded-[3px] border border-[#4c7c3c] bg-linear-to-b from-[#d4f4c0] to-[#7cd060]">
            <svg viewBox="0 0 20 20" className="w-5 h-5"><path d="M5 1V8M1.5 4.5H8.5" stroke="#1c5cd0" strokeWidth="2.5" /><circle cx="12" cy="12" r="4" fill="none" stroke="#c22" strokeWidth="1.5" /><path d="M12 5V19M5 12H19" stroke="#222" strokeWidth="1.3" /></svg>
          </button>
        </div>
        <button className="mt-[3px] flex h-[23px] items-center justify-between border border-[#8c8c8c] bg-[#c4c4c4] pr-[5px] pl-2 text-[13px] font-bold text-[#333]">列表<Chevron /></button>
      </div>
      {['可变半径点', '拐角倒角', '拐角突然停止', '修剪', '溢出解', '设置'].map((t) => <Section key={t} title={t} />)}
      <Section title="预览" open />
      <div className="flex h-[47px] items-center border border-[#a8a8a8] bg-[#d2d2d2] pr-[8px] pb-[2px] pl-[7px]">
        <label className="flex flex-1 items-center gap-[2px]">
          <span className="relative flex">
            <input type="checkbox" defaultChecked className="h-[15px] w-[15px] appearance-none rounded-[2px] border-2 border-[#5c7c94] bg-linear-to-b from-[#e4f4fc] to-[#4cb4dc]" />
            <svg viewBox="0 0 15 15" className="pointer-events-none absolute inset-0 w-[15px] h-[15px]"><path d="M3 6L7 11L13 4" fill="none" stroke="#14306c" strokeWidth="2.5" /></svg>
          </span>
          预览
        </label>
        <span className="pr-[3px]">显示结果</span>
        <button aria-label="显示结果" className="flex h-[30px] w-[30px] items-center justify-center rounded-[3px] border-2 border-[#777] bg-linear-to-b from-white to-[#ccc]">
          <svg viewBox="0 0 24 24" className="w-6 h-6"><circle cx="9" cy="9" r="7" fill="#f8f8f8" stroke="#666" /><path d="M14 14L22 22" stroke="#555" strokeWidth="4" /><path d="M15 15L22 22" stroke="#ddd" strokeWidth="1.5" /></svg>
        </button>
      </div>
      <div className="mt-1 flex justify-end gap-[7px] border-t border-[#bbb] pt-1 pr-[10px] pb-[5px]">
        {['< 确定 >', '应用', '取消'].map((t) => (
          <button key={t} className="h-[19px] w-16 rounded-[4px] border-2 border-[#888] bg-linear-to-b from-[#fafafa] to-[#d4d4d4] leading-[14px] whitespace-pre">{t}</button>
        ))}
      </div>
    </div>
  </section>
);

const Model = () => (
  <svg className="absolute inset-0 h-full w-full font-['Noto_Sans',sans-serif]" aria-label="模型">
    <g transform="translate(-263 -221)">
      <path d="M386 831L535 315L1195 307L1047 823Z" fill="#12d4fb" />
      <path d="M386 831L1047 823L1081 917L421 926Z" fill="#08476c" />
      <path d="M1047 823L1195 307L1232 400L1228 416L1083 912L1081 917Z" fill="#1195e8" />
      <path d="M1178 308L1026 822M1202 322L1056 823M1056 823L1085 908M1202 322L1228 412" fill="none" stroke="#1c4058" />
      <path d="M1026 822L1064 917" stroke="#0c3450" />
      <path d="M1178 308L1183 322L1210 396Q1214 402 1222 402L1228 414M1185 308L1220 398M1026 822L1050 821M1062 918Q1080 916 1085 904" fill="none" stroke="#a8d4e8" />
      <path d="M1232 401L1196 307L1047 823L1080 916" fill="none" stroke="#e8952e" strokeWidth="3" />
      <path d="M1095 592L1188 631" stroke="#a09c80" strokeWidth="1.5" />
      <path d="M1078 591L1095 586V596Z M1114 606L1122 602L1124 616Z" fill="#1480c0" />
      <path d="M1095 591L1114 591L1118 603" fill="none" stroke="#2c5c78" />
      <circle cx="957" cy="567" r="29" fill="#12e00c" />
      <circle cx="957" cy="567" r="6" fill="none" stroke="#14ecb8" strokeWidth="3" />
      <path d="M968 587L963 582L966 580L963 576L966 574L968 573L973 573L980 579L982 586L976 590Z" fill="#fff" stroke="#111" strokeWidth="1.2" />
      <path d="M967 577L972 582M970 575L975 580" stroke="#111" />
      <path d="M975 590L981 584L985 588L979 594Z" fill="#111" />
      <path d="M421 924L406 885L411 888Z" fill="#1428b8" />
      <path d="M421 924L428 894L433 884L430 896Z" fill="#b8f8b0" />
      <path d="M424 925H455L455 922L474 926L455 929Z" fill="#c02844" />
      <text x="458" y="921" fill="#a83450" fontSize="12">XC</text>
      <text x="415" y="882" fill="#208c4c" fontSize="12">YC</text>
      <path d="M325 925H351L358 942L352 960H322Z" fill="#a4a4a4" />
      <path d="M325 925L332 943L322 960M332 943H358M351 925L345 943L348 960" fill="none" stroke="#ccc" />
      <path d="M329 956L333 928" stroke="#a8e8a0" strokeWidth="2" />
      <path d="M327 961L318 932" stroke="#1830d0" strokeWidth="4" />
      <path d="M327 962H356V958L370 962L356 965Z" fill="#c8203c" stroke="#c8203c" />
      <circle cx="327" cy="962" r="4" fill="#ccc" />
      <text x="310" y="932" fill="#1c2c90" fontSize="12">Z</text>
      <text x="333" y="927" fill="#607060" fontSize="10">Y</text>
      <text x="370" y="966" fill="#a02038" fontSize="12">X</text>
    </g>
  </svg>
);

const FloatInput = () => (
  <label className="absolute top-[400px] left-[925px] flex h-[26px] w-[122px] items-center bg-linear-to-b from-[#e8e8e8] to-[#bdbdbd] pr-1">
    <span className="flex h-full w-[13px] items-center justify-center bg-[#333]"><span className="h-4 w-[6px] border-x-2 border-dotted border-[#aaa]" /></span>
    <span className="flex-1 pl-[6px] whitespace-pre"><Mixed>半径 1</Mixed></span>
    <span className="flex h-[17px] w-[61px] overflow-hidden rounded-[3px] border border-[#555] bg-white">
      <input defaultValue="3" className="min-w-0 flex-1 pl-[3px] font-['Liberation_Mono',monospace] text-[11px] outline-none" />
      <DownArrow />
    </span>
  </label>
);

const InputMethodBar = () => (
  <div className="absolute right-1 bottom-[54px] flex h-6 w-[181px] items-center justify-between border border-[#c8d4e0] bg-white pr-1 pl-[28px] text-[#2c74bc]">
    <svg viewBox="0 0 28 28" className="absolute -top-[4px] -left-[5px] w-7 h-7">
      <path d="M1 5L23 1L27 22L6 27Z" fill="#e4452c" stroke="#b83018" />
      <path d="M21 9Q9 5 9 10Q9 13 15 14Q21 15 19 18Q16 22 8 19" fill="none" stroke="#fff" strokeWidth="3.5" />
    </svg>
    <span className="text-[15px] font-bold">中</span>
    <svg viewBox="0 0 16 16" className="w-[14px] h-[14px]"><path d="M11 1Q17 9 9 13Q4 15 1 11Q10 11 11 1Z" fill="currentColor" /></svg>
    <svg viewBox="0 0 14 14" className="w-[14px] h-[14px]"><circle cx="3" cy="4" r="2" fill="none" stroke="currentColor" strokeWidth="1.5" /><path d="M9 6Q14 5 12 10L9 13Q11 10 9 9Z" fill="currentColor" /></svg>
    <svg viewBox="0 0 18 14" className="w-4 h-[13px]"><rect x="1" y="1" width="16" height="12" rx="1" fill="none" stroke="currentColor" strokeWidth="2" /><path d="M4 5H15M4 8H15" stroke="currentColor" strokeWidth="2" strokeDasharray="2 1" /><path d="M5 11H13" stroke="currentColor" /></svg>
    <svg viewBox="0 0 16 16" className="w-[14px] h-[14px] text-[#b8c0cc]"><circle cx="7" cy="4" r="3.5" fill="currentColor" /><path d="M1 15Q1 8 7 8Q13 8 13 15Z" fill="currentColor" /><path d="M9 9H15V15H9Z" fill="#fff" stroke="currentColor" /></svg>
    <svg viewBox="0 0 16 16" className="w-[14px] h-[14px]"><path d="M5 1Q8 4 11 1L16 4L14 8L12 7V15H4V7L2 8L0 4Z" fill="currentColor" /></svg>
    <svg viewBox="0 0 16 16" className="w-[14px] h-[14px]"><path d="M2 14L9 7" stroke="currentColor" strokeWidth="3.5" /><path d="M8 7Q7 2 12 1L10 4L13 6L15 4Q16 9 10 9Z" fill="currentColor" /></svg>
  </div>
);

const Viewport = () => (
  <main className="relative flex-1 overflow-hidden bg-black text-white">
    <div className="absolute top-[30px] left-[82px] flex gap-[14px] text-[72px] leading-[72px]"><span>点</span><span>冠</span><span>学</span><span>院</span></div>
    <p className="absolute top-[104px] left-[50px] font-['Noto_Sans','Noto_Sans_CJK_SC',sans-serif] text-[36px] leading-[38px]">UG绘图</p>
    <Model />
    <div className="absolute top-[698px] left-[177px]">
      <p className="text-[50px] leading-[50px] font-bold">点冠教育</p>
      <p className="font-['Noto_Sans',sans-serif] text-[20px] leading-[20px] font-medium">DIANGUAN EDUCATION</p>
    </div>
    <p className="absolute top-[698px] left-[486px] text-[51px] leading-[51px] font-light whitespace-nowrap">没有攀登不上的高峰，只有不努力的人！</p>
    <div className="text-black">
      <BlendDialog />
      <FloatInput />
    </div>
    <InputMethodBar />
  </main>
);

export default function App() {
  return (
    <div className="flex h-screen min-h-[900px] flex-col overflow-hidden bg-black py-[22px] font-['Noto_Sans_CJK_SC',sans-serif] text-[12px] leading-4 text-black">
      <TitleBar />
      <MenuBar />
      <Toolbars />
      <SelectionBar />
      <StatusBar />
      <div className="flex min-h-0 flex-1">
        <ResourceBar />
        <Navigator />
        <div className="w-[34px] shrink-0 bg-[#d0d0d0]">
          <SideTools names="trim corner extendCrv lenCrv" />
          <SideTools names="profile line arc rect2 spline letterA offset bridge proj1 proj2 proj3 sect unwrap" />
        </div>
        <Viewport />
      </div>
      <footer className="flex h-[30px] shrink-0 bg-linear-to-b from-[#f0f0f0] to-[#cfcfcf] pt-[2px] pl-[109px]">
        <Bar className="border-l border-l-[#aeaeae]">
          <Tools names=": absCsys dims layers prev next layerMove copyBox post purpleBox wireCube radius net lamp stripes info cyl redCube pinkPlane split1 split2 rect v hex v csys target ring tex hatch spot circle >" />
        </Bar>
      </footer>
    </div>
  );
}
